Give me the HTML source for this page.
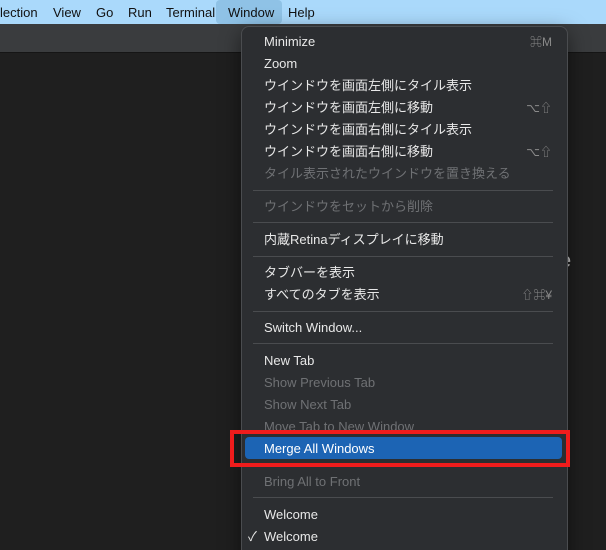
<!DOCTYPE html>
<html><head><meta charset="utf-8"><style>
html,body{margin:0;width:606px;height:550px;overflow:hidden}
body{background:#1f1f1f;font-family:"Liberation Sans","Noto Sans CJK JP",sans-serif;position:relative}
.bar{position:absolute;top:0;left:0;width:606px;height:24px;background:#aad9fb;font-size:13px;color:#111}
.bar span{position:absolute;top:5px}
.tb{position:absolute;top:24px;left:0;width:606px;height:28px;background:#3a3c3e;border-bottom:1px solid #151515}
.menu{position:absolute;left:241px;top:26px;width:325px;height:540px;background:#2c2e31;border:1px solid #4a4c4f;border-radius:8px;box-shadow:0 6px 20px rgba(0,0,0,.5)}
.i{position:absolute;left:264px;font-size:13px;color:#e8e8e8;height:22px;line-height:22px;transform:translateY(-10px);white-space:nowrap}
.d{color:#6f7174}
.k{position:absolute;right:54px;font-size:12px;color:#8a8a8a;height:22px;line-height:22px;transform:translateY(-10px)}
.s{position:absolute;left:253px;width:300px;height:1px;background:#4a4c4f}
</style></head><body>
<div class="bar"><span style="left:0">lection</span><span style="left:53px">View</span><span style="left:96px">Go</span><span style="left:128px">Run</span><span style="left:166px">Terminal</span>
<div style="position:absolute;left:216px;top:0;width:66px;height:24px;background:#8fc2e6;border-radius:4px"></div><span style="left:228px">Window</span><span style="left:288px">Help</span></div>
<div class="tb"></div>
<div style="position:absolute;left:560px;top:250px;color:#ccc;font-size:20px">e</div>
<div class="menu"></div>
<div class="i" style="top:41px">Minimize</div><div class="k" style="top:41px">⌘M</div>
<div class="i" style="top:63px">Zoom</div>
<div class="i" style="top:85px">ウインドウを画面左側にタイル表示</div>
<div class="i" style="top:107px">ウインドウを画面左側に移動</div><div class="k" style="top:107px">⌥⇧</div>
<div class="i" style="top:129px">ウインドウを画面右側にタイル表示</div>
<div class="i" style="top:151px">ウインドウを画面右側に移動</div><div class="k" style="top:151px">⌥⇧</div>
<div class="i d" style="top:173px">タイル表示されたウインドウを置き換える</div>
<div class="s" style="top:190px"></div>
<div class="i d" style="top:206px">ウインドウをセットから削除</div>
<div class="s" style="top:222px"></div>
<div class="i" style="top:239px">内蔵Retinaディスプレイに移動</div>
<div class="s" style="top:256px"></div>
<div class="i" style="top:272px">タブバーを表示</div>
<div class="i" style="top:294px">すべてのタブを表示</div><div class="k" style="top:294px">⇧⌘¥</div>
<div class="s" style="top:311px"></div>
<div class="i" style="top:327px">Switch Window...</div>
<div class="s" style="top:343px"></div>
<div class="i" style="top:360px">New Tab</div>
<div class="i d" style="top:382px">Show Previous Tab</div>
<div class="i d" style="top:404px">Show Next Tab</div>
<div class="i d" style="top:426px">Move Tab to New Window</div>
<div style="position:absolute;left:230px;top:430px;width:332px;height:29px;border:4px solid #f01c1c"></div>
<div style="position:absolute;left:245px;top:437px;width:317px;height:22px;background:#1c64b4;border-radius:4px"></div>
<div class="i" style="top:448px;color:#fff">Merge All Windows</div>
<div class="i d" style="top:481px">Bring All to Front</div>
<div class="s" style="top:497px"></div>
<div class="i" style="top:514px">Welcome</div>
<div class="i" style="top:536px">Welcome</div>
<div class="i" style="top:536px;left:248px">✓</div>
</body></html>
